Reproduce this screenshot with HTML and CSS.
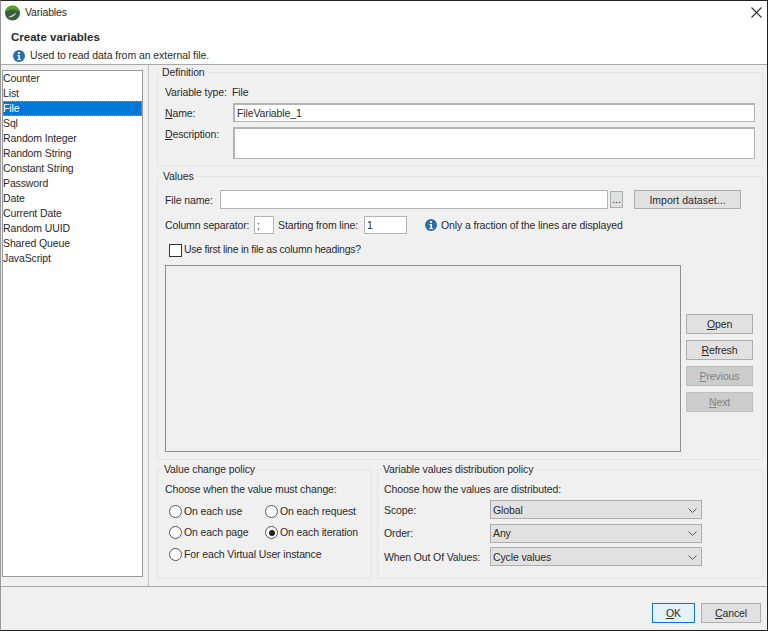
FILE: index.html
```html
<!DOCTYPE html>
<html lang="en">
<head>
<meta charset="utf-8">
<title>Variables</title>
<link rel="stylesheet" href="styles.css">
</head>
<body>
<div class="dialog">
  <div class="head">
    <div class="titlebar">
      <svg class="logo" width="17" height="16" viewBox="0 0 16 16"><circle cx="8" cy="8" r="7.5" fill="#3f5a42"/><path d="M.6 7A7.5 7.5 0 0 1 15.4 7C12 3.5 5 3.5.6 7Z" fill="#4fa51e"/><path d="M3.5 12C6 11 9 9.5 12 7.5 10.5 11 7 13 3.5 12Z" fill="#d5dccf"/></svg>
      <span class="title">Variables</span>
      <svg class="close" width="11" height="11" viewBox="0 0 11 11"><path d="M.5.5l10 10M10.5.5l-10 10" stroke="#333" stroke-width="1.1" fill="none"/></svg>
    </div>
    <div class="heading">Create variables</div>
    <div class="subheading">
      <svg class="info" viewBox="0 0 12 12"><circle cx="6" cy="6" r="6" fill="#2a6fa8"/><rect x="5" y="2.2" width="2" height="1.8" fill="#fff"/><path d="M4.4 5H7v4h1v1H4.4V9h1V6h-1Z" fill="#fff"/></svg>
      <span>Used to read data from an external file.</span>
    </div>
  </div>
  <div class="body">
    <ul class="list">
      <li>Counter</li>
      <li>List</li>
      <li class="selected">File</li>
      <li>Sql</li>
      <li>Random Integer</li>
      <li>Random String</li>
      <li>Constant String</li>
      <li>Password</li>
      <li>Date</li>
      <li>Current Date</li>
      <li>Random UUID</li>
      <li>Shared Queue</li>
      <li>JavaScript</li>
    </ul>
    <div class="main">
      <fieldset class="group definition">
        <legend>Definition</legend>
        <div class="type-row"><span class="lbl-def">Variable type:</span><span>File</span></div>
        <div class="def-row"><label class="lbl-def"><u>N</u>ame:</label><div class="input name-input">FileVariable_1</div></div>
        <div class="def-row top"><label class="lbl-def"><u>D</u>escription:</label><div class="input desc-input"></div></div>
      </fieldset>
      <fieldset class="group values">
        <legend>Values</legend>
        <div class="file-row">
          <label class="lbl-file">File name:</label>
          <div class="input file-input"></div>
          <div class="btn dots">...</div>
          <div class="btn import">Import dataset...</div>
        </div>
        <div class="sep-row">
          <label class="lbl-sep">Column separator:</label>
          <div class="input sep-input">;</div>
          <label class="lbl-start">Starting from line:</label>
          <div class="input line-input">1</div>
          <svg class="info fraction-icon" viewBox="0 0 12 12"><circle cx="6" cy="6" r="6" fill="#2a6fa8"/><rect x="5" y="2.2" width="2" height="1.8" fill="#fff"/><path d="M4.4 5H7v4h1v1H4.4V9h1V6h-1Z" fill="#fff"/></svg>
          <span>Only a fraction of the lines are displayed</span>
        </div>
        <div class="check-row"><span class="check"></span><span class="check-text">Use first line in file as column headings?</span></div>
        <div class="table-row">
          <div class="table-box"></div>
          <div class="table-btns">
            <div class="btn side"><span><u>O</u>pen</span></div>
            <div class="btn side"><span><u>R</u>efresh</span></div>
            <div class="btn side disabled"><span><u>P</u>revious</span></div>
            <div class="btn side disabled"><span><u>N</u>ext</span></div>
          </div>
        </div>
      </fieldset>
      <div class="policies">
        <fieldset class="group change">
          <legend>Value change policy</legend>
          <div class="choose">Choose when the value must change:</div>
          <div class="radios">
            <div class="radio-item"><span class="radio"></span>On each use</div>
            <div class="radio-item"><span class="radio"></span>On each request</div>
            <div class="radio-item"><span class="radio"></span>On each page</div>
            <div class="radio-item"><span class="radio checked"></span>On each iteration</div>
            <div class="radio-item wide"><span class="radio"></span>For each Virtual User instance</div>
          </div>
        </fieldset>
        <fieldset class="group distribution">
          <legend>Variable values distribution policy</legend>
          <div class="choose">Choose how the values are distributed:</div>
          <div class="combos">
            <label>Scope:</label><div class="combo"><span>Global</span><svg width="9" height="5" viewBox="0 0 9 5"><path d="M.5.5l4 4 4-4" fill="none" stroke="#555"/></svg></div>
            <label>Order:</label><div class="combo"><span>Any</span><svg width="9" height="5" viewBox="0 0 9 5"><path d="M.5.5l4 4 4-4" fill="none" stroke="#555"/></svg></div>
            <label>When Out Of Values:</label><div class="combo"><span>Cycle values</span><svg width="9" height="5" viewBox="0 0 9 5"><path d="M.5.5l4 4 4-4" fill="none" stroke="#555"/></svg></div>
          </div>
        </fieldset>
      </div>
    </div>
  </div>
  <div class="footer">
    <div class="btn ok"><span><u>O</u>K</span></div>
    <div class="btn cancel"><span><u>C</u>ancel</span></div>
  </div>
</div>
</body>
</html>
```
FILE: styles.css
```css
* { box-sizing: border-box; }
html, body { margin: 0; padding: 0; }
body { width: 768px; height: 631px; overflow: hidden; font: 10.5px/13px "Liberation Sans", Arial, sans-serif; letter-spacing: -0.12px; color: #2a2a2a; background: #f0f0f0; white-space: nowrap; }
u { text-decoration: underline; text-underline-offset: 1px; }
.dialog { width: 768px; height: 631px; display: flex; flex-direction: column; border-top: 1px solid #222; border-right: 1px solid #222; border-bottom: 1px solid #222; border-left: 1px solid #999; background: #f0f0f0; }
.head { height: 64px; flex: none; background: #fff; border-bottom: 1px solid #a8a8a8; padding-top: 3px; }
.titlebar { display: flex; align-items: center; height: 17px; padding: 0 5px 0 3px; }
.logo { flex: none; }
.title { margin-left: 4px; flex: 1; }
.heading { margin: 10px 0 0 10px; font-weight: 700; font-size: 11.5px; letter-spacing: 0; }
.subheading { display: flex; align-items: center; gap: 5px; margin: 5px 0 0 12px; letter-spacing: -0.06px; }
.info { width: 12px; height: 12px; flex: none; }
.body { flex: 1; min-height: 0; display: flex; padding: 0 0 0 1px; }
.list { width: 141px; height: 507px; flex: none; margin: 5px 0 0; padding: 0; list-style: none; background: #fff; border: 1px solid #9a9a9a; }
.list li { height: 15px; line-height: 15px; }
.list li.selected { background: #0078d7; color: #fff; outline: 1px dotted #7ab; outline-offset: -1px; }
.main { width: 619px; flex: none; margin-left: 5px; padding: 0 0 0 8px; border-left: 1px solid #c4c4c4; }
.group { margin: 0; padding: 0; border: 1px solid #e4e4e4; min-width: 0; }
.group legend { padding: 0 3px 0 2px; line-height: 13px; }
.definition { width: 606px; height: 100px; margin-top: 1px; padding: 0 7px; }
.definition legend { margin-left: -5px; }
.type-row { display: flex; height: 13px; align-items: center; margin-top: 7px; }
.lbl-def { width: 68px; flex: none; }
.type-row .lbl-def { width: 67px; }
.def-row { display: flex; align-items: center; margin-top: 4px; }
.def-row:last-child { margin-top: 5px; }
.def-row label { padding-top: 1px; }
.def-row.top { align-items: flex-start; }
.input { background: #fff; border: 1px solid #b4b4b4; height: 19px; line-height: 18px; padding-left: 2px; }
.name-input { width: 522px; border-width: 2px 1px 1px 2px; line-height: 17px; }
.desc-input { width: 522px; height: 32px; border-width: 2px 1px 1px 2px; border-color: #b4b4b4; }
.values { width: 606px; height: 290px; margin-top: 4px; padding: 0 7px; }
.values legend { margin-left: -4px; }
.file-row { display: flex; align-items: center; margin-top: 7px; }
.lbl-file { width: 55px; padding-top: 1px; }
.file-input { width: 388px; }
.btn { background: #e1e1e1; border: 1px solid #adadad; display: flex; align-items: center; justify-content: center; }
.dots { width: 13px; height: 17px; margin-left: 2px; }
.import { width: 107px; height: 19px; margin-left: 11px; padding-top: 1px; letter-spacing: 0.02px; }
.sep-row { display: flex; align-items: center; margin-top: 7px; }
.lbl-sep { width: 89px; }
.sep-input { width: 20px; height: 18px; line-height: 16px; }
.lbl-start { width: 80px; margin: 0 6px 0 4px; }
.line-input { width: 43px; height: 18px; line-height: 16px; }
.fraction-icon { margin: 0 4px 0 18px; }
.check-row { display: flex; align-items: center; margin: 10px 0 0 4px; height: 12px; }
.check { width: 13px; height: 13px; border: 1px solid #333; background: #fff; margin-right: 2px; flex: none; }
.check-text { margin-top: -2px; letter-spacing: -0.25px; }
.table-row { display: flex; margin-top: 9px; }
.table-box { width: 516px; height: 187px; border: 1px solid #8f8f98; background: #f0f0f0; }
.table-btns { display: flex; flex-direction: column; gap: 6px; margin: 49px 0 0 5px; }
.side { width: 67px; height: 20px; }
.disabled { background: #ccc; border-color: #bfbfbf; color: #838383; }
.policies { display: flex; gap: 5px; margin-top: 3px; }
.change { width: 215px; height: 116px; padding: 0 7px; }
.change legend { margin-left: -3px; }
.distribution { width: 386px; height: 116px; padding: 0 6px; }
.distribution legend { margin-left: -3px; }
.choose { margin-top: 7px; }
.radios { display: grid; grid-template-columns: 96px auto; row-gap: 8.5px; margin: 8.5px 0 0 4px; }
.radio-item { display: flex; align-items: center; height: 13px; }
.radio-item.wide { grid-column: 1 / 3; }
.radio { width: 13px; height: 13px; border: 1px solid #555; border-radius: 50%; background: #fff; margin-right: 2px; flex: none; position: relative; }
.radio.checked::after { content: ""; position: absolute; left: 2.5px; top: 2.5px; width: 6px; height: 6px; border-radius: 50%; background: #222; }
.combos { display: grid; grid-template-columns: 106px 212px; row-gap: 4.5px; align-items: center; margin-top: 4px; }
.combos label { padding-top: 1px; }
.combo { height: 19px; background: #e1e1e1; border: 1px solid #adadad; display: flex; align-items: center; justify-content: space-between; padding: 1px 4px 0 2px; }
.footer { height: 44px; flex: none; display: flex; justify-content: flex-end; gap: 6px; padding: 16px 6px 0 0; border-top: 1px solid #a8a8a8; }
.ok { width: 43px; height: 20px; border-color: #0078d7; background: #e5f1fb; }
.cancel { width: 60px; height: 20px; }
```
